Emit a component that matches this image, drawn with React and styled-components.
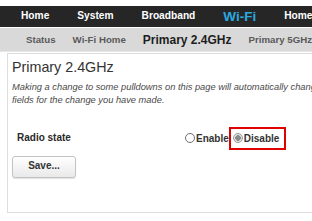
import React from "react";
import styled, { createGlobalStyle } from "styled-components";

const Global = createGlobalStyle`
  html, body { margin: 0; padding: 0; background: #fff; }
  body { width: 312px; height: 221px; overflow: hidden; font-family: "Liberation Sans", Arial, sans-serif; }
`;

const Page = styled.div`
  padding-top: 6px;
  width: 312px;
  overflow: hidden;
`;

const NavBar = styled.nav`
  height: 21px;
  background: #262626;
  display: flex;
  align-items: center;
  gap: 28px;
  padding-left: 21px;
  white-space: nowrap;
`;

const NavItem = styled.span`
  color: ${(p) => (p.$active ? "#2ba8e0" : "#fff")};
  font-weight: bold;
  font-size: ${(p) => (p.$active ? "13.5px" : "10.2px")};
  line-height: 1;
`;

const SubNav = styled.div`
  margin-top: 1px;
  height: 23px;
  background: #d9d9d9;
  border-bottom: 1px solid #e6e6e6;
  display: flex;
  align-items: center;
  gap: 17px;
  padding-left: 26px;
  white-space: nowrap;
`;

const SubItem = styled.span`
  color: ${(p) => (p.$active ? "#1e1e1e" : "#5a5a5a")};
  font-weight: bold;
  font-size: ${(p) => (p.$active ? "12px" : "9.7px")};
  line-height: 1;
`;

const Panel = styled.section`
  margin: 1px -40px 0 7px;
  border: 1px solid #dedede;
  padding: 5px 0 34px 4px;
`;

const Title = styled.h1`
  margin: 0;
  font-size: 14.3px;
  line-height: 17px;
  font-weight: normal;
  color: #333;
`;

const Note = styled.p`
  margin: 5px 0 0 0;
  font-size: 9.3px;
  line-height: 13px;
  font-style: italic;
  color: #4a4a4a;
  width: 330px;
`;

const Row = styled.div`
  margin-top: 20px;
  display: flex;
  align-items: center;
`;

const Label = styled.span`
  width: 173px;
  padding-left: 5px;
  box-sizing: border-box;
  font-size: 10px;
  font-weight: bold;
  color: #2a2a2a;
  margin-top: -3px;
`;

const RadioGroup = styled.div`
  display: flex;
  align-items: center;
`;

const Option = styled.label`
  display: flex;
  align-items: center;
  font-size: 10px;
  font-weight: bold;
  color: #333;
  height: 19px;
  box-sizing: content-box;
  padding: ${(p) => (p.$highlight ? "0 5px 0 2px" : "0")};
  border: ${(p) => (p.$highlight ? "2px solid #e00000" : "none")};
`;

const Circle = styled.span`
  width: 10px;
  height: 10px;
  box-sizing: border-box;
  border-radius: 50%;
  border: 1px solid ${(p) => (p.$checked ? "#9a9a9a" : "#6f6f6f")};
  background: ${(p) =>
    p.$checked
      ? "radial-gradient(circle, #8a8a8a 0 2.6px, #e4e4e4 3px)"
      : "#fff"};
  margin-right: 1px;
  margin-top: -1px;
`;

const SaveButton = styled.button`
  margin-top: 6px;
  width: 64px;
  height: 22px;
  border: 1px solid #c2c2c2;
  border-radius: 3px;
  background: linear-gradient(#ffffff, #e9e9e9);
  box-shadow: 0 1px 1px rgba(0, 0, 0, 0.12);
  font-family: "Liberation Sans", Arial, sans-serif;
  font-size: 10px;
  font-weight: bold;
  color: #333;
  padding: 0 0 3px 0;
  display: block;
`;

export default function App() {
  return (
    <>
      <Global />
      <Page>
        <NavBar>
          <NavItem>Home</NavItem>
          <NavItem>System</NavItem>
          <NavItem>Broadband</NavItem>
          <NavItem $active>Wi-Fi</NavItem>
          <NavItem>Home</NavItem>
        </NavBar>
        <SubNav>
          <SubItem>Status</SubItem>
          <SubItem>Wi-Fi Home</SubItem>
          <SubItem $active>Primary 2.4GHz</SubItem>
          <SubItem>Primary 5GHz</SubItem>
        </SubNav>
        <Panel>
          <Title>Primary 2.4GHz</Title>
          <Note>
            Making a change to some pulldowns on this page will automatically change
            fields for the change you have made.
          </Note>
          <Row>
            <Label>Radio state</Label>
            <RadioGroup>
              <Option>
                <Circle />
                Enable
              </Option>
              <Option $highlight>
                <Circle $checked />
                Disable
              </Option>
            </RadioGroup>
          </Row>
          <SaveButton>Save...</SaveButton>
        </Panel>
      </Page>
    </>
  );
}
